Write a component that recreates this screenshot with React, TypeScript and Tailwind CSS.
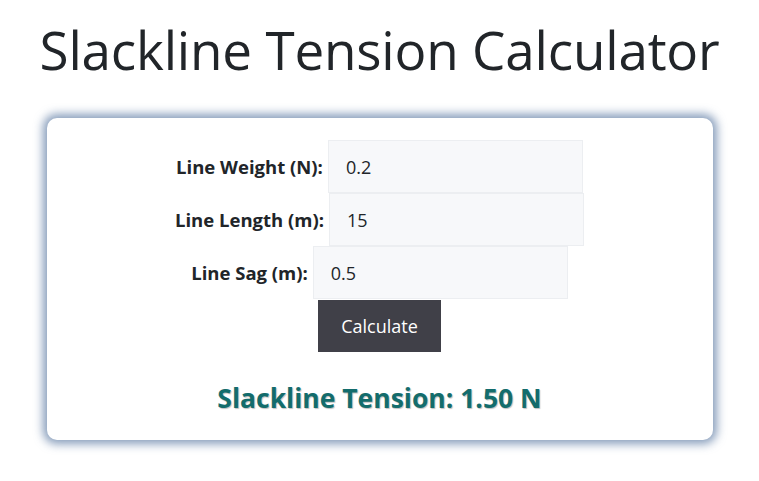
import { useState } from "react";

const fields = [
  { id: "weight", label: "Line Weight (N):" },
  { id: "length", label: "Line Length (m):" },
  { id: "sag", label: "Line Sag (m):" },
];

export default function App() {
  const [values, setValues] = useState<Record<string, string>>({
    weight: "0.2",
    length: "15",
    sag: "0.5",
  });
  const [tension, setTension] = useState(1.5);

  const calculate = () => {
    const w = parseFloat(values.weight);
    const l = parseFloat(values.length);
    const s = parseFloat(values.sag);
    setTension((w * l) / (4 * s));
  };

  return (
    <div className="min-h-screen bg-white font-['Open_Sans','Noto_Sans',sans-serif] text-[#212529]">
      <h1 className="pt-[14px] text-center text-[53px] leading-[72px] font-normal tracking-[-0.2px]">
        Slackline Tension Calculator
      </h1>
      <div className="mx-auto mt-[32px] w-[666px] rounded-[10px] bg-white pt-[22px] pb-[24px] shadow-[0_0_10px_4px_rgba(70,105,150,0.65)]">
        <div className="flex flex-col items-center">
          {fields.map((f) => (
            <div key={f.id} className="flex items-center">
              <label className="mr-[5px] text-[18.5px] font-bold">{f.label}</label>
              <input
                value={values[f.id]}
                onChange={(e) => setValues({ ...values, [f.id]: e.target.value })}
                className="h-[53px] w-[255px] border border-[#eceef1] bg-[#f7f8fa] px-[17px] text-[18px] outline-none"
              />
            </div>
          ))}
          <button
            onClick={calculate}
            className="mt-[1px] h-[52px] w-[123px] bg-[#404048] text-[18px] text-white"
          >
            Calculate
          </button>
          <p className="mt-[28px] text-[26.5px] leading-[36px] font-bold text-[#136c6c] [text-shadow:1px_1px_1px_rgba(0,0,0,0.25)]">
            Slackline Tension: {tension.toFixed(2)} N
          </p>
        </div>
      </div>
    </div>
  );
}
